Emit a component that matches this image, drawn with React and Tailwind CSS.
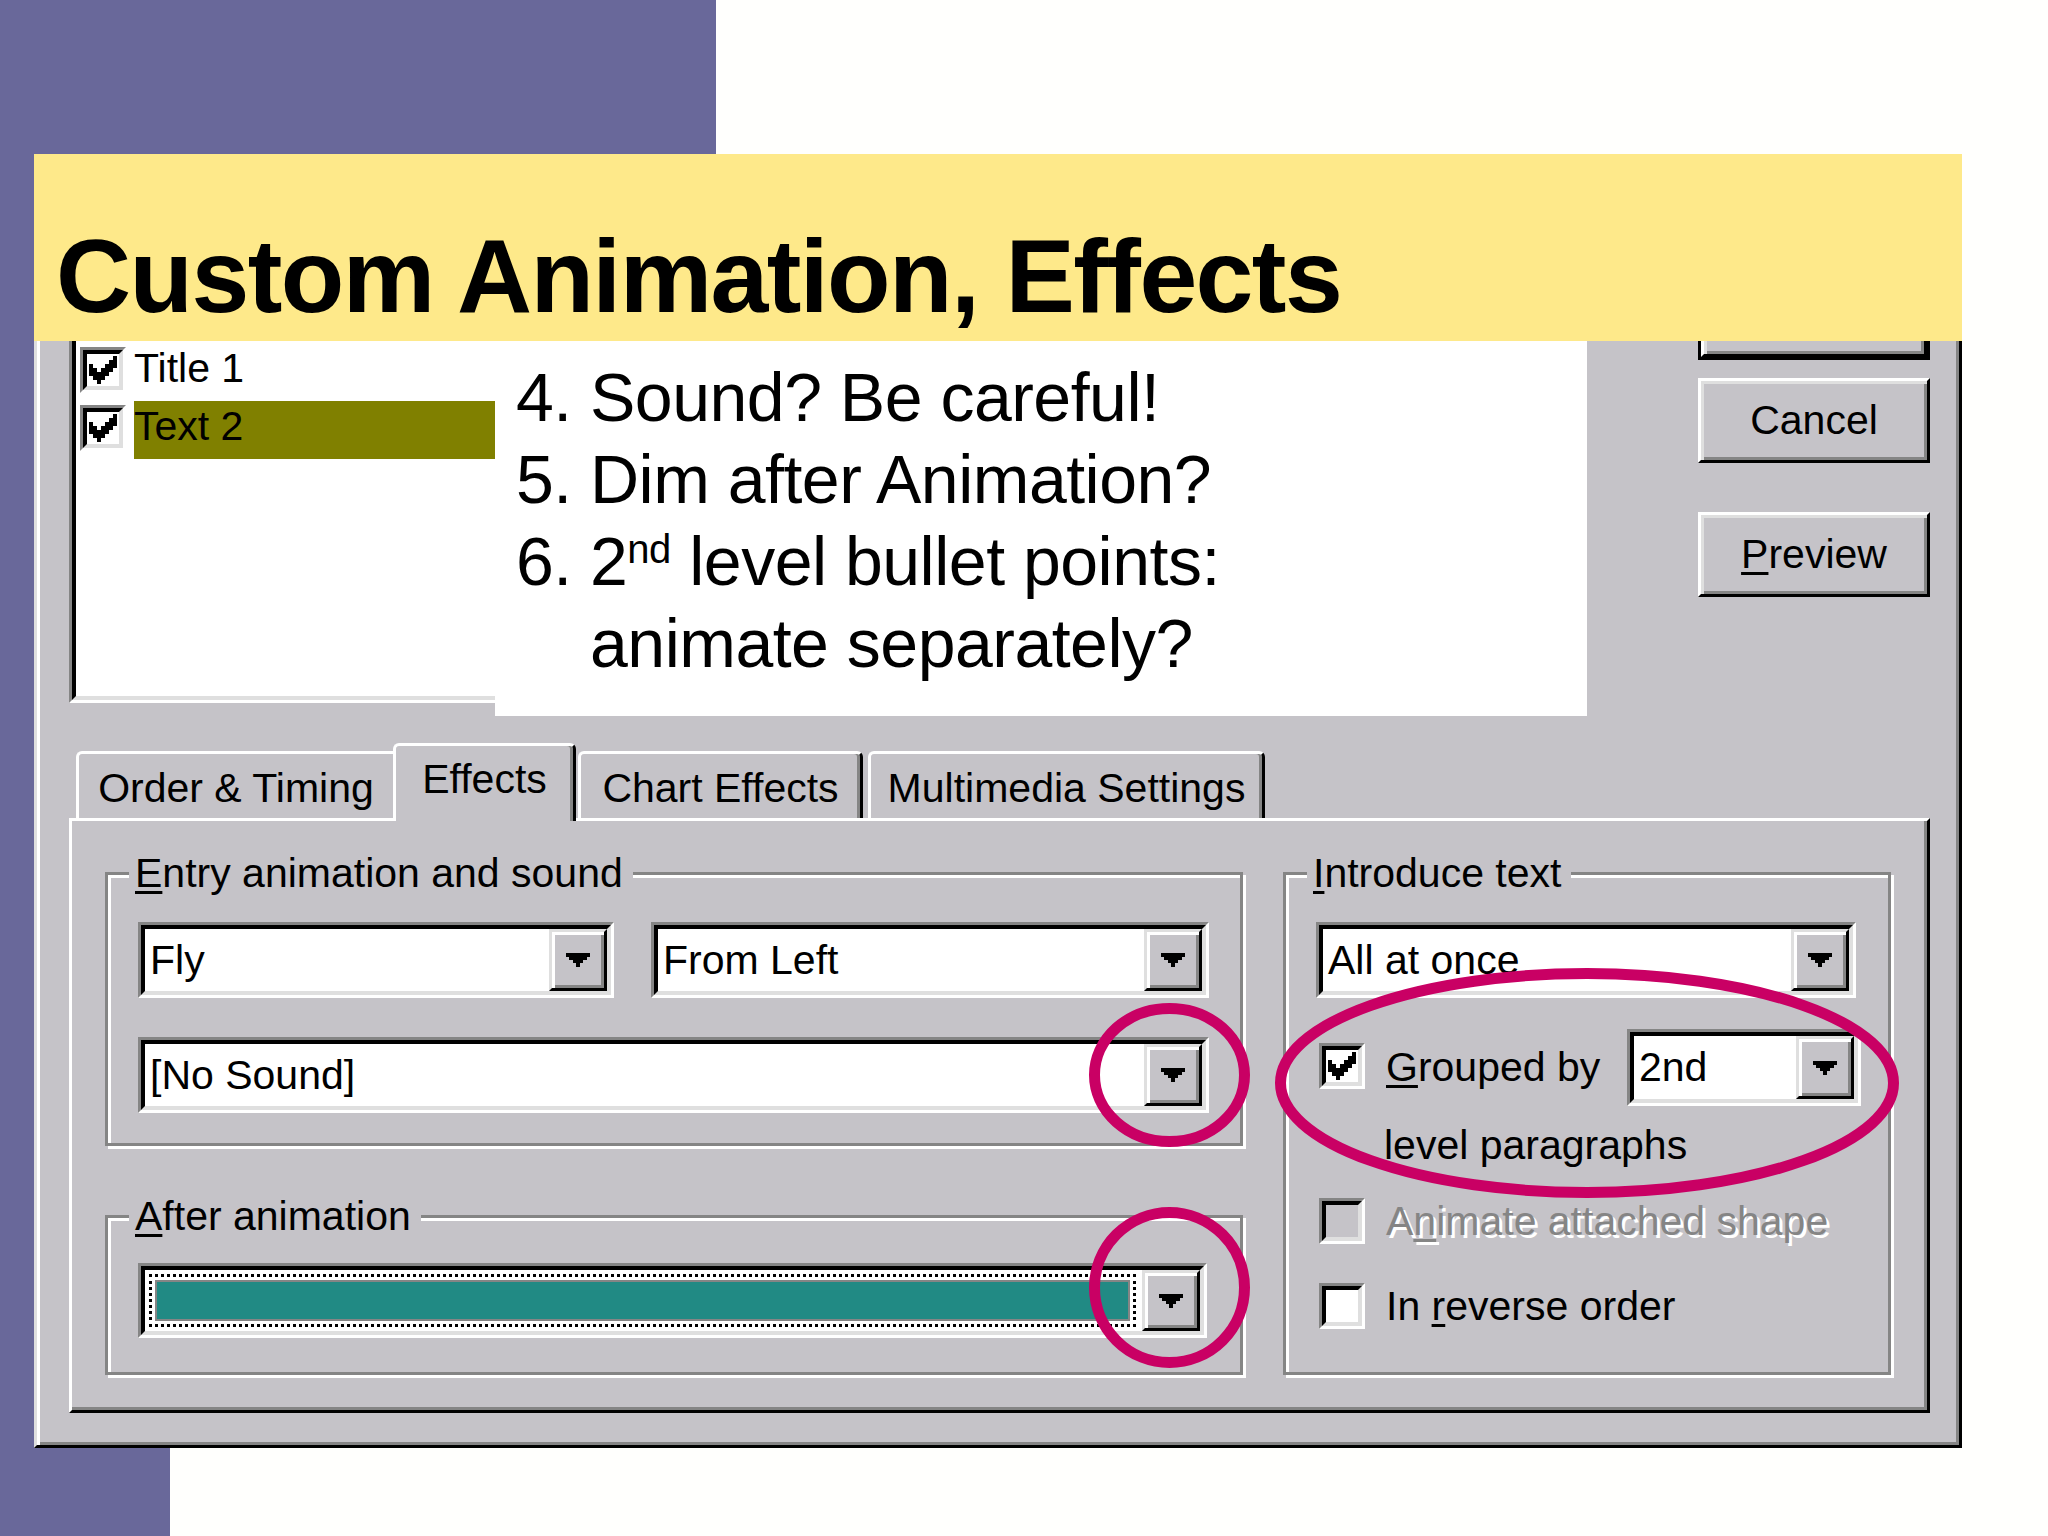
import React from "react";

function Arrow() {
  return (
    <svg width="24" height="14" viewBox="0 0 7 4" shapeRendering="crispEdges">
      <path d="M0 0h7v1h-7z M1 1h5v1h-5z M2 2h3v1h-3z M3 3h1v1h-1z" fill="#000" />
    </svg>
  );
}

function Check() {
  return (
    <svg width="28" height="28" viewBox="0 0 7 7" shapeRendering="crispEdges">
      <path
        d="M6 0h1v1h-1z M5 1h2v1h-2z M0 2h1v1h-1z M4 2h3v1h-3z M0 3h2v1h-2z M3 3h3v1h-3z M0 4h5v1h-5z M1 5h3v1h-3z M2 6h1v1h-1z"
        fill="#000"
      />
    </svg>
  );
}

function CheckBox({ checked = false, disabled = false, className = "" }) {
  return (
    <div
      className={`flex h-[46px] w-[46px] shrink-0 border-[3px] border-t-[#858585] border-l-[#858585] border-r-white border-b-white ${className}`}
    >
      <div
        className={`flex flex-1 items-center justify-center border-[4px] border-t-black border-l-black border-r-[#dfdfdf] border-b-[#dfdfdf] ${
          disabled ? "bg-[#c5c3c8]" : "bg-white"
        }`}
      >
        {checked && <Check />}
      </div>
    </div>
  );
}

function DropBtn() {
  return (
    <div className="flex w-[58px] shrink-0 items-center justify-center border-[3px] border-t-[#dfdfdf] border-l-[#dfdfdf] border-r-black border-b-black bg-[#c5c3c8] shadow-[inset_3px_3px_0_#fff,inset_-3px_-3px_0_#858585]">
      <Arrow />
    </div>
  );
}

function Combo({ className = "", inner = "items-center pl-[5px]", children }) {
  return (
    <div
      className={`flex shrink-0 border-[3px] border-t-[#858585] border-l-[#858585] border-r-white border-b-white ${className}`}
    >
      <div className="flex min-w-0 flex-1 border-[4px] border-t-black border-l-black border-r-[#dfdfdf] border-b-[#dfdfdf] bg-white">
        <div className={`flex min-w-0 flex-1 whitespace-nowrap ${inner}`}>{children}</div>
        <DropBtn />
      </div>
    </div>
  );
}

function Btn({ children, className = "" }) {
  return (
    <div
      className={`flex h-[85px] w-[232px] items-center justify-center border-[3px] border-t-white border-l-white border-r-black border-b-black bg-[#c5c3c8] shadow-[inset_3px_3px_0_#dfdfdf,inset_-3px_-3px_0_#858585] ${className}`}
    >
      {children}
    </div>
  );
}

function Group({ label, className = "", children }) {
  return (
    <div
      className={`flex flex-col border-[3px] border-[#858585] shadow-[inset_3px_3px_0_#fff,3px_3px_0_#fff] ${className}`}
    >
      <div className="-mt-[24px] ml-[21px] w-fit whitespace-nowrap bg-[#c5c3c8] pl-[6px] pr-[10px] leading-[45px]">
        {label}
      </div>
      {children}
    </div>
  );
}

const U = ({ children }) => (
  <u className="[text-decoration-thickness:3px] [text-underline-offset:4px]">{children}</u>
);

function Dialog() {
  return (
    <div className="relative z-10 flex h-[1294px] w-[1928px] flex-col border-[3px] border-t-[#dfdfdf] border-l-[#dfdfdf] border-r-black border-b-black bg-[#c5c3c8] pl-[32px] pr-[29px] pt-[118px] text-[41px] leading-[45px] shadow-[inset_3px_3px_0_#fff,inset_-3px_-3px_0_#858585]">
      {/* top section: list + buttons */}
      <div className="flex items-start">
        <div className="mt-[25px] flex h-[403px] w-[1491px] border-[3px] border-t-[#858585] border-l-[#858585] border-r-white border-b-white">
          <div className="flex flex-1 flex-col border-[4px] border-t-black border-l-black border-r-[#dfdfdf] border-b-[#dfdfdf] bg-white pl-[4px] pt-[36px]">
            <div className="flex h-[58px]">
              <CheckBox checked className="mt-[4px]" />
              <div className="ml-[8px] flex-1 pt-[3px]">Title 1</div>
            </div>
            <div className="flex h-[58px]">
              <CheckBox checked className="mt-[4px]" />
              <div className="ml-[8px] flex-1 bg-[#808000] pt-[3px]">Text 2</div>
            </div>
          </div>
        </div>
        <div className="ml-auto flex flex-col">
          <div className="flex h-[85px] w-[232px] border-[3px] border-black">
            <div className="flex flex-1 items-center justify-center border-[3px] border-t-white border-l-white border-r-black border-b-black shadow-[inset_3px_3px_0_#dfdfdf,inset_-3px_-3px_0_#858585]">
              OK
            </div>
          </div>
          <Btn className="mt-[18px]">Cancel</Btn>
          <Btn className="mt-[49px]">
            <span>
              <U>P</U>review
            </span>
          </Btn>
        </div>
      </div>

      {/* tabs */}
      <div className="relative z-10 -mb-[3px] ml-[7px] mt-[40px] flex items-end">
        <div className="mb-[3px] flex h-[67px] w-[317px] justify-center rounded-tl-[6px] border-l-[3px] border-t-[3px] border-l-white border-t-white bg-[#c5c3c8] pt-[12px] whitespace-nowrap">
          Order &amp; Timing
        </div>
        <div className="flex h-[78px] w-[183px] justify-center rounded-t-[6px] border-l-[3px] border-r-[3px] border-t-[3px] border-l-white border-r-black border-t-white bg-[#c5c3c8] pt-[11px] shadow-[inset_-3px_0_0_#858585]">
          Effects
        </div>
        <div className="mb-[3px] ml-[2px] flex h-[67px] w-[285px] justify-center rounded-t-[6px] border-l-[3px] border-r-[3px] border-t-[3px] border-l-white border-r-black border-t-white bg-[#c5c3c8] pt-[12px] whitespace-nowrap shadow-[inset_-3px_0_0_#858585]">
          Chart Effects
        </div>
        <div className="mb-[3px] ml-[5px] flex h-[67px] w-[397px] justify-center rounded-t-[6px] border-l-[3px] border-r-[3px] border-t-[3px] border-l-white border-r-black border-t-white bg-[#c5c3c8] pt-[12px] whitespace-nowrap shadow-[inset_-3px_0_0_#858585]">
          Multimedia Settings
        </div>
      </div>

      {/* tab panel */}
      <div className="flex h-[595px] border-[3px] border-t-white border-l-white border-r-black border-b-black pl-[33px] pt-[51px] shadow-[inset_-3px_-3px_0_#858585]">
        <div className="flex w-[1138px] flex-col">
          <Group
            className="h-[274px]"
            label={
              <span>
                <U>E</U>ntry animation and sound
              </span>
            }
          >
            <div className="mt-[26px] flex pl-[30px]">
              <Combo className="h-[76px] w-[476px]">Fly</Combo>
              <Combo className="ml-[37px] h-[76px] w-[558px]">From Left</Combo>
            </div>
            <Combo className="ml-[30px] mt-[39px] h-[76px] w-[1071px]">[No Sound]</Combo>
          </Group>
          <Group
            className="mt-[69px] h-[160px]"
            label={
              <span>
                <U>A</U>fter animation
              </span>
            }
          >
            <Combo className="ml-[30px] mt-[24px] h-[75px] w-[1069px]" inner="p-[4px] pr-[6px]">
              <div className="flex flex-1 border-[3px] border-dotted border-black p-[3px]">
                <div className="flex-1 border-[2px] border-[#858585] bg-[#218a84]" />
              </div>
            </Combo>
          </Group>
        </div>
        <Group
          className="ml-[40px] h-[503px] w-[608px]"
          label={
            <span>
              <U>I</U>ntroduce text
            </span>
          }
        >
          <Combo className="ml-[30px] mt-[26px] h-[76px] w-[540px]">All at once</Combo>
          <div className="ml-[33px] mr-[27px] mt-[31px] flex h-[77px] items-center">
            <CheckBox checked className="-mt-[4px]" />
            <span className="ml-[21px] whitespace-nowrap">
              <U>G</U>rouped by
            </span>
            <Combo className="ml-auto h-[77px] w-[234px]">2nd</Combo>
          </div>
          <div className="ml-[98px] mt-[17px] whitespace-nowrap">level paragraphs</div>
          <div className="ml-[33px] mt-[30px] flex items-center">
            <CheckBox disabled />
            <span className="ml-[21px] whitespace-nowrap text-[#858585] [text-shadow:3px_3px_0_#fff]">
              A<U>n</U>imate attached shape
            </span>
          </div>
          <div className="ml-[33px] mt-[39px] flex items-center">
            <CheckBox />
            <span className="ml-[21px] whitespace-nowrap">
              In <U>r</U>everse order
            </span>
          </div>
        </Group>
      </div>
    </div>
  );
}

export default function App() {
  return (
    <div className="relative h-[1536px] w-[2048px] overflow-hidden bg-[#fffffd] pl-[34px] pt-[154px] font-['Liberation_Sans',Arial,sans-serif] text-black">
      <div className="absolute left-0 top-0 h-[500px] w-[716px] bg-[#69689a]" />
      <div className="absolute left-0 top-0 h-[1536px] w-[170px] bg-[#69689a]" />

      <Dialog />

      {/* slide title */}
      <div className="absolute left-[34px] top-[154px] z-20 flex h-[187px] w-[1928px] items-end bg-[#fee98a] pb-[13px] pl-[22px]">
        <h1 className="whitespace-nowrap text-[104px] font-bold leading-none tracking-[-1.6px]">
          Custom Animation, Effects
        </h1>
      </div>

      {/* slide text box */}
      <div className="absolute left-[495px] top-[341px] z-20 h-[375px] w-[1092px] bg-white pl-[21px] pt-[15px] text-[68px] leading-[82px] tracking-[-0.5px]">
        <div className="grid grid-cols-[74px_auto]">
          <span>4.</span>
          <span>Sound? Be careful!</span>
          <span>5.</span>
          <span>Dim after Animation?</span>
          <span>6.</span>
          <span>
            2<span className="relative -top-[22px] text-[40px] leading-none">nd</span> level bullet points:
          </span>
          <span />
          <span>animate separately?</span>
        </div>
      </div>

      {/* annotation ellipses */}
      <svg
        className="pointer-events-none absolute left-0 top-0 z-30"
        width="2048"
        height="1536"
        viewBox="0 0 2048 1536"
        fill="none"
        stroke="#c90064"
        strokeWidth="11"
      >
        <ellipse cx="1169.5" cy="1075" rx="75" ry="66.5" />
        <ellipse cx="1169.5" cy="1287.5" rx="75" ry="75" />
        <ellipse cx="1587" cy="1083" rx="306.5" ry="109.5" />
      </svg>
    </div>
  );
}
